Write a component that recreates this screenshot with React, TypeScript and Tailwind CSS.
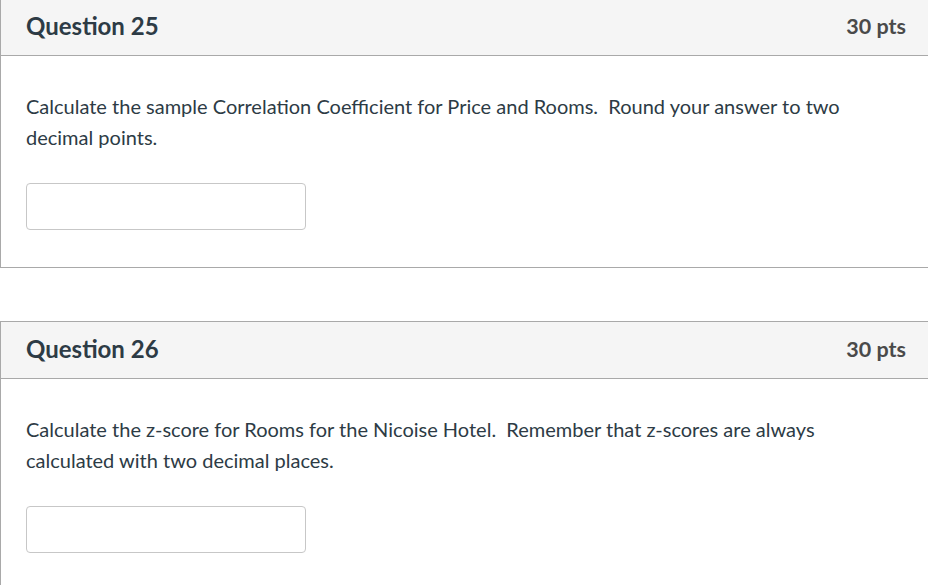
import React from 'react';

type Question = { id: number; points: number; lines: string[] };

const questions: Question[] = [
  {
    id: 25,
    points: 30,
    lines: [
      'Calculate the sample Correlation Coefficient for Price and Rooms.\u00a0 Round your answer to two',
      'decimal points.',
    ],
  },
  {
    id: 26,
    points: 30,
    lines: [
      'Calculate the z-score for Rooms for the Nicoise Hotel.\u00a0 Remember that z-scores are always',
      'calculated with two decimal places.',
    ],
  },
];

const QuestionCard: React.FC<{ q: Question }> = ({ q }) => (
  <div className="border-y border-l border-[#a9a9a9] bg-white">
    {/* header */}
    <div className="flex h-[57px] items-center justify-between border-b border-[#a9a9a9] bg-[#f5f5f5] pb-[2px] pl-[25px] pr-[22px]">
      <h3 className="text-[24px] font-bold text-[#2d3b45]">Question {q.id}</h3>
      <span className="text-[21.5px] font-bold text-[#4a4a4a]">{q.points} pts</span>
    </div>
    {/* body */}
    <div className="pl-[25px] pt-[35px] pb-[37px]">
      <div className="text-[20px] leading-[31px] text-[#2d3b45]">
        {q.lines.map((l, i) => (
          <div key={i}>{l}</div>
        ))}
      </div>
      <input
        type="text"
        className="mt-[30px] block h-[47px] w-[280px] rounded-[4px] border border-[#c7c7c7] bg-white px-3 text-[16px] outline-none"
      />
    </div>
  </div>
);

export default function App() {
  return (
    <div
      className="h-[585px] w-[928px] overflow-hidden bg-white"
      style={{ fontFamily: 'Lato, "Noto Sans", sans-serif' }}
    >
      <div className="-mt-[2px] flex flex-col gap-[53px]">
        {questions.map((q) => (
          <QuestionCard key={q.id} q={q} />
        ))}
      </div>
    </div>
  );
}
